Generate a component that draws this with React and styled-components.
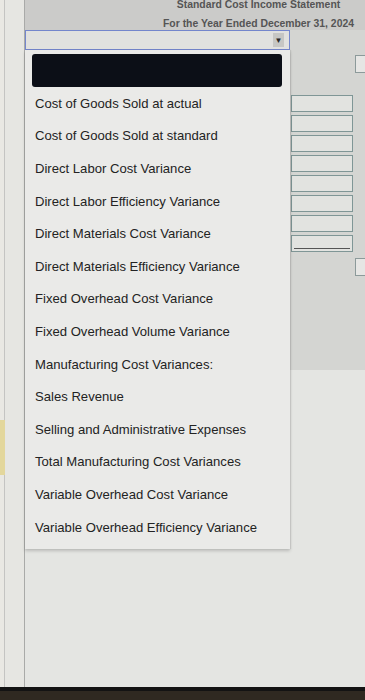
import React from "react";
import styled, { createGlobalStyle } from "styled-components";

const Global = createGlobalStyle`
  html, body { margin: 0; padding: 0; }
  body {
    width: 365px; height: 700px; overflow: hidden;
    background: #e4e5e2;
    font-family: "Liberation Sans", Arial, sans-serif;
  }
`;

const Screen = styled.div`
  width: 365px; height: 700px;
  display: flex; flex-direction: column;
`;

const Content = styled.div`
  flex: 1; display: flex; min-height: 0;
`;

const LeftStrip = styled.div`
  width: 24px; flex: none;
  background: linear-gradient(to right, #e9e8e3 0 4px, #c4c4c2 4px 5px, #e6e6e2 5px);
  border-right: 1px solid #a9aaa8;
  display: flex; flex-direction: column;
`;

const Marker = styled.div`
  margin-top: 420px; width: 5px; height: 55px;
  background: #e3d79c;
`;

const Main = styled.div`
  flex: 1; display: flex; flex-direction: column; min-width: 0;
`;

const Header = styled.div`
  height: 30px; background: #cbcbc9;
  display: flex; justify-content: flex-end;
  padding-right: 11px;
`;

const TitleBlock = styled.div`
  display: flex; flex-direction: column; align-items: center;
  color: #555; font-weight: bold;
`;

const Title = styled.div`
  font-size: ${p => p.$size}px;
  line-height: 1;
  margin-top: ${p => p.$top}px;
  white-space: nowrap;
`;

const Body = styled.div`
  display: flex; position: relative;
`;

const SelectCol = styled.div`
  width: 265px; flex: none; position: relative;
`;

const Select = styled.div`
  height: 18px; width: 258px;
  border: 1px solid #7486cc;
  background: #e1e1df;
  display: flex; justify-content: flex-end; align-items: center;
  padding-right: 5px;
  box-sizing: content-box;
`;

const Arrow = styled.div`
  width: 11px; height: 14px; background: #c6c6c4;
  display: flex; align-items: center; justify-content: center;
  color: #2a2a2a; font-size: 8px;
`;

const Menu = styled.div`
  position: absolute; top: 20px; left: 0;
  width: 265px;
  background: #eaeae8;
  box-shadow: 0 2px 3px rgba(0,0,0,0.18), 1px 0 1px rgba(0,0,0,0.08);
  padding: 4px 0 6px;
  z-index: 2;
`;

const Item = styled.div`
  height: 32.6px;
  display: flex; align-items: center;
  padding-left: 10px;
  font-size: 13.1px; color: #232323;
  white-space: nowrap;
`;

const SelectedItem = styled.div`
  height: 33px; margin: 0 8px 0 7px;
  background: #0c0f17; border-radius: 3px;
`;

const RightPanel = styled.div`
  flex: 1; height: 340px; background: #d4d5d2;
  display: flex; padding-left: 1px;
`;

const Inputs = styled.div`
  display: flex; flex-direction: column; gap: 3px;
  padding-top: 65px;
`;

const Input = styled.div`
  width: 60px; height: 15px;
  border: 1px solid #7f9696;
  background: #e2e3e0;
  display: flex; align-items: flex-end; justify-content: center;
`;

const Underline = styled.div`
  width: 56px; height: 1px; background: #555; margin-bottom: 2px;
`;

const EdgeCol = styled.div`
  display: flex; flex-direction: column; margin-left: 2px;
`;

const EdgeBox = styled.div`
  width: 12px; height: 16px;
  border: 1px solid #8c9a9a; border-right: none;
  background: #e6e6e4;
  margin-top: ${p => p.$top}px;
`;

const BottomBar = styled.div`
  height: 13px; flex: none;
  background: linear-gradient(#131313 0 4px, #2f2921 4px);
`;

const items = [
  "Cost of Goods Sold at actual",
  "Cost of Goods Sold at standard",
  "Direct Labor Cost Variance",
  "Direct Labor Efficiency Variance",
  "Direct Materials Cost Variance",
  "Direct Materials Efficiency Variance",
  "Fixed Overhead Cost Variance",
  "Fixed Overhead Volume Variance",
  "Manufacturing Cost Variances:",
  "Sales Revenue",
  "Selling and Administrative Expenses",
  "Total Manufacturing Cost Variances",
  "Variable Overhead Cost Variance",
  "Variable Overhead Efficiency Variance",
];

export default function App() {
  return (
    <>
      <Global />
      <Screen>
        <Content>
          <LeftStrip>
            <Marker />
          </LeftStrip>
          <Main>
            <Header>
              <TitleBlock>
                <Title $size={10.4} $top={0}>Standard Cost Income Statement</Title>
                <Title $size={10.4} $top={9}>For the Year Ended December 31, 2024</Title>
              </TitleBlock>
            </Header>
            <Body>
              <SelectCol>
                <Select>
                  <Arrow>▼</Arrow>
                </Select>
                <Menu>
                  <SelectedItem />
                  {items.map(t => (
                    <Item key={t}>{t}</Item>
                  ))}
                </Menu>
              </SelectCol>
              <RightPanel>
                <Inputs>
                  {Array.from({ length: 8 }).map((_, i) => (
                    <Input key={i}>{i === 7 && <Underline />}</Input>
                  ))}
                </Inputs>
                <EdgeCol>
                  <EdgeBox $top={25} />
                  <EdgeBox $top={185} />
                </EdgeCol>
              </RightPanel>
            </Body>
          </Main>
        </Content>
        <BottomBar />
      </Screen>
    </>
  );
}
